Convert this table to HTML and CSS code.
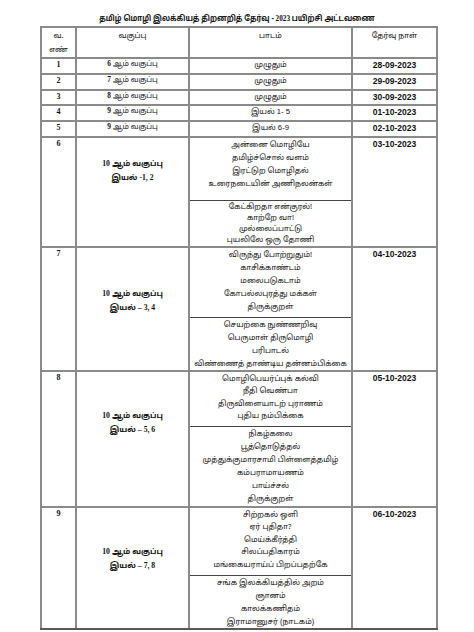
FILE: index.html
```html
<!DOCTYPE html>
<html lang="ta">
<head>
<meta charset="utf-8">
<title>பயிற்சி அட்டவணை</title>
<link rel="stylesheet" href="styles.css">
</head>
<body>
<h1 class="title"><span class="title-text">தமிழ் மொழி இலக்கியத் திறனறித் தேர்வு - <span class="n">2023</span> பயிற்சி அட்டவணை</span></h1>
<table class="sched">
  <colgroup><col class="c-no"><col class="c-cls"><col class="c-sub"><col class="c-date"></colgroup>
  <thead>
    <tr class="head"><th>வ.<br>எண்</th><th>வகுப்பு</th><th>பாடம்</th><th>தேர்வு நாள்</th></tr>
  </thead>
  <tbody>
    <tr class="simple"><td class="no">1</td><td class="cls"><span class="n">6</span> ஆம் வகுப்பு</td><td class="sub">முழுதும்</td><td class="date">28-09-2023</td></tr>
    <tr class="simple"><td class="no">2</td><td class="cls"><span class="n">7</span> ஆம் வகுப்பு</td><td class="sub">முழுதும்</td><td class="date">29-09-2023</td></tr>
    <tr class="simple"><td class="no">3</td><td class="cls"><span class="n">8</span> ஆம் வகுப்பு</td><td class="sub">முழுதும்</td><td class="date">30-09-2023</td></tr>
    <tr class="simple"><td class="no">4</td><td class="cls"><span class="n">9</span> ஆம் வகுப்பு</td><td class="sub">இயல் <span class="s">1- 5</span></td><td class="date">01-10-2023</td></tr>
    <tr class="simple"><td class="no">5</td><td class="cls"><span class="n">9</span> ஆம் வகுப்பு</td><td class="sub">இயல் <span class="s">6-9</span></td><td class="date">02-10-2023</td></tr>
    <tr>
      <td class="no">6</td>
      <td class="cls"><div class="cls-big pad-6"><span class="n">10</span> ஆம் வகுப்பு<br>இயல் <span class="n">-1, 2</span></div></td>
      <td class="sub">
        <div class="grp h63">அன்னை மொழியே<br>தமிழ்ச்சொல் வளம்<br>இரட்டுற மொழிதல்<br>உரைநடையின் அணிநலன்கள்</div>
        <div class="grp last h45 tight">கேட்கிறதா என்குரல்!<br>காற்றே வா!<br>முல்லைப்பாட்டு<br>புயலிலே ஒரு தோணி</div>
      </td>
      <td class="date">03-10-2023</td>
    </tr>
    <tr>
      <td class="no">7</td>
      <td class="cls"><div class="cls-big pad-7"><span class="n">10</span> ஆம் வகுப்பு<br>இயல் <span class="n">– 3, 4</span></div></td>
      <td class="sub">
        <div class="grp h70">விருந்து போற்றுதும்!<br>காசிக்காண்டம்<br>மலைபடுகடாம்<br>கோபல்லபுரத்து மக்கள்<br>திருக்குறள்</div>
        <div class="grp last h52">செயற்கை நுண்ணறிவு<br>பெருமாள் திருமொழி<br>பரிபாடல்<br>விண்ணைத் தாண்டிய தன்னம்பிக்கை</div>
      </td>
      <td class="date">04-10-2023</td>
    </tr>
    <tr>
      <td class="no">8</td>
      <td class="cls"><div class="cls-big pad-8"><span class="n">10</span> ஆம் வகுப்பு<br>இயல் <span class="n">– 5, 6</span></div></td>
      <td class="sub">
        <div class="grp h55 tight12">மொழிபெயர்ப்புக் கல்வி<br>நீதி வெண்பா<br>திருவிளையாடற் புராணம்<br>புதிய நம்பிக்கை</div>
        <div class="grp last h79">நிகழ்கலை<br>பூத்தொடுத்தல்<br>முத்துக்குமாரசாமி பிள்ளைத்தமிழ்<br>கம்பராமாயணம்<br>பாய்ச்சல்<br>திருக்குறள்</div>
      </td>
      <td class="date">05-10-2023</td>
    </tr>
    <tr>
      <td class="no">9</td>
      <td class="cls"><div class="cls-big pad-9"><span class="n">10</span> ஆம் வகுப்பு<br>இயல் <span class="n">– 7, 8</span></div></td>
      <td class="sub">
        <div class="grp h68 tight12">சிற்றகல் ஒளி<br>ஏர் புதிதா?<br>மெய்க்கீர்த்தி<br>சிலப்பதிகாரம்<br>மங்கையராய்ப் பிறப்பதற்கே</div>
        <div class="grp last h52">சங்க இலக்கியத்தில் அறம்<br>ஞானம்<br>காலக்கணிதம்<br>இராமானுசர் (நாடகம்)</div>
      </td>
      <td class="date">06-10-2023</td>
    </tr>
  </tbody>
</table>
</body>
</html>
```

FILE: styles.css
```css
html, body {
  margin: 0;
  padding: 0;
  background: #ffffff;
}
body {
  font-family: "Noto Sans Tamil", "Lohit Tamil", "Latha", "Noto Sans", "DejaVu Sans", sans-serif;
  color: #111;
  font-size: 7.7px;
}
.title {
  margin: 0;
  padding-top: 13px;
  height: 13px;
  line-height: 13px;
  font-size: 8px;
  font-weight: bold;
  text-align: center;
}
.title-text {
  display: inline-block;
  transform: scaleX(0.9);
}
.n {
  font-family: "Liberation Serif", serif;
  font-weight: bold;
  line-height: 1;
}
.s {
  font-family: "Liberation Sans", sans-serif;
  line-height: 1;
}
.sched {
  margin: 0 0 0 40px;
  width: 396px;
  border-collapse: collapse;
  table-layout: fixed;
}
.c-no { width: 35px; }
.c-cls { width: 113px; }
.c-sub { width: 163px; }
.c-date { width: 85px; }
.sched th, .sched td {
  border: 2px solid #8a8a8a;
  padding: 0;
  vertical-align: top;
  text-align: center;
}
.sched tbody tr:last-child td { border-bottom-color: #5a5a5a; }
.sched th {
  font-weight: normal;
  line-height: 14px;
  padding-top: 1px;
  height: 26px;
}
.simple td {
  height: 13.8px;
  line-height: 12px;
}
.cls { font-size: 7.4px; }
.no {
  font-family: "Liberation Serif", serif;
  font-weight: bold;
  font-size: 8px;
  line-height: 12px;
}
.date {
  font-family: "Liberation Sans", sans-serif;
  font-weight: bold;
  font-size: 8.5px;
  line-height: 12px;
}
.cls-big {
  font-size: 7.7px;
  font-weight: bold;
  line-height: 14px;
}
.pad-6 { padding-top: 19px; }
.pad-7 { padding-top: 39px; }
.pad-8 { padding-top: 37px; }
.pad-9 { padding-top: 37px; }
.grp {
  line-height: 13px;
  border-bottom: 1px solid #444;
  box-sizing: border-box;
  padding-top: 1px;
}
.grp.last { border-bottom: 0; }
.tight { line-height: 11px; }
.tight12 { line-height: 12.5px; }
.h63 { height: 63px; }
.h45 { height: 45px; }
.h70 { height: 70px; }
.h52 { height: 52px; }
.h55 { height: 55px; }
.h79 { height: 79px; }
.h68 { height: 68px; }
```
